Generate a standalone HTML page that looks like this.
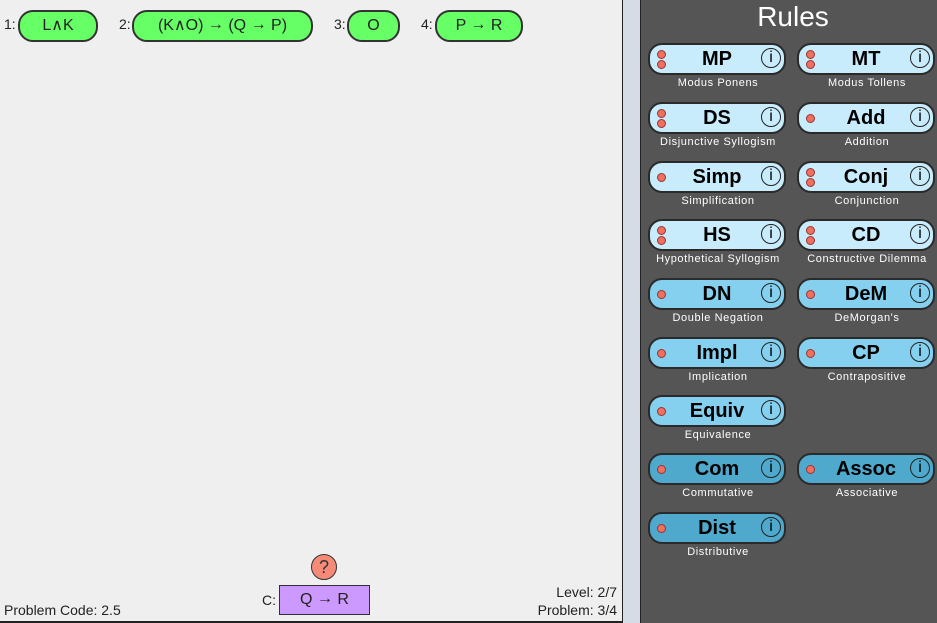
<!DOCTYPE html>
<html><head><meta charset="utf-8"><style>
body{margin:0;width:937px;height:623px;overflow:hidden;background:#efefef;font-family:"Liberation Sans",sans-serif;position:relative}
.a{position:absolute}
.lbl{position:absolute;font-size:14px;color:#222}
.pill{position:absolute;height:28px;top:10px;background:#66ff66;border:2px solid #333;border-radius:15px;font-size:16px;text-align:center;line-height:28px;color:#222}
.rule{position:absolute;width:134px;height:28px;border:2px solid #2a2a2a;border-radius:14px;font-size:20px;font-weight:bold;text-align:center;line-height:28px;color:#000}
.rule .i{position:absolute;right:3px;top:3px;width:18px;height:18px;border:1.5px solid #222;border-radius:50%;font-size:16px;line-height:18px;font-weight:normal;text-align:center}
.d{position:absolute;width:7px;height:7px;border-radius:50%;background:#f07060;border:1px solid #933;left:7px}
.cap{position:absolute;width:150px;font-size:11px;color:#fff;text-align:center;letter-spacing:.6px}
</style></head><body>
<div class="a" style="left:622px;top:0;width:1px;height:623px;background:#222"></div>
<div class="a" style="left:623px;top:0;width:17px;height:623px;background:#d6dce6"></div>
<div class="a" style="left:640px;top:0;width:1px;height:623px;background:#222"></div>
<div class="a" style="left:0;top:621px;width:623px;height:2px;background:#222"></div>
<div class="a" style="left:641px;top:0;width:296px;height:623px;background:#555"></div>
<div class="a" style="left:641px;top:1px;width:304px;text-align:center;font-size:28px;color:#fff">Rules</div>

<div class="lbl" style="left:4px;top:16px">1:</div><div class="pill" style="left:18px;width:76px">L∧K</div>
<div class="lbl" style="left:119px;top:16px">2:</div><div class="pill" style="left:132px;width:177px">(K∧O) <span style="position:relative;top:-1px">→</span> (Q <span style="position:relative;top:-1px">→</span> P)</div>
<div class="lbl" style="left:334px;top:16px">3:</div><div class="pill" style="left:347px;width:49px">O</div>
<div class="lbl" style="left:421px;top:16px">4:</div><div class="pill" style="left:435px;width:84px">P <span style="position:relative;top:-1px">→</span> R</div>

<div class="a" style="left:311px;top:554px;width:24px;height:24px;border:1.5px solid #333;border-radius:50%;background:#f58a78;text-align:center;font-size:18px;line-height:24px;color:#333">?</div>
<div class="lbl" style="left:262px;top:592px">C:</div>
<div class="a" style="left:279px;top:585px;width:89px;height:28px;border:1.5px solid #333;background:#cc99ff;text-align:center;font-size:16px;line-height:28px;color:#222">Q <span style="position:relative;top:-1px">→</span> R</div>
<div class="lbl" style="left:4px;top:602px">Problem Code: 2.5</div>
<div class="lbl" style="left:500px;top:584px;width:117px;text-align:right">Level: 2/7</div>
<div class="lbl" style="left:500px;top:602px;width:117px;text-align:right">Problem: 3/4</div>

<div id="rules"></div>
<script>
var R=[["MP","Modus Ponens",0,43,2,"#c8ecfc"],["MT","Modus Tollens",1,43,2,"#c8ecfc"],
["DS","Disjunctive Syllogism",0,102,2,"#c8ecfc"],["Add","Addition",1,102,1,"#c8ecfc"],
["Simp","Simplification",0,161,1,"#c8ecfc"],["Conj","Conjunction",1,161,2,"#c8ecfc"],
["HS","Hypothetical Syllogism",0,219,2,"#c8ecfc"],["CD","Constructive Dilemma",1,219,2,"#c8ecfc"],
["DN","Double Negation",0,278,1,"#84d0ee"],["DeM","DeMorgan's",1,278,1,"#84d0ee"],
["Impl","Implication",0,337,1,"#84d0ee"],["CP","Contrapositive",1,337,1,"#84d0ee"],
["Equiv","Equivalence",0,395,1,"#84d0ee"],
["Com","Commutative",0,453,1,"#4fa9cc"],["Assoc","Associative",1,453,1,"#4fa9cc"],
["Dist","Distributive",0,512,1,"#4fa9cc"]];
var h="";
R.forEach(function(r){var x=r[2]?797:648,y=r[3];
var dots=r[4]==2?'<div class="d" style="top:5px"></div><div class="d" style="top:15px"></div>':'<div class="d" style="top:10px"></div>';
h+='<div class="rule" style="left:'+x+'px;top:'+y+'px;background:'+r[5]+'">'+dots+r[0]+'<div class="i">i</div></div>';
h+='<div class="cap" style="left:'+(x-5)+'px;top:'+(y+34)+'px">'+r[1]+'</div>';});
document.getElementById("rules").innerHTML=h;
</script>
</body></html>
